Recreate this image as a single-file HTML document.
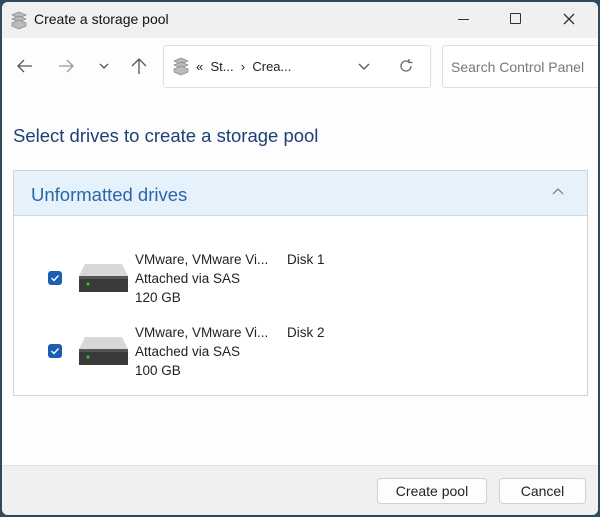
<!DOCTYPE html>
<html><head><style>
*{margin:0;padding:0;box-sizing:border-box}
body{width:600px;height:517px;overflow:hidden;font-family:"Liberation Sans",sans-serif;background:#2f4a5c;position:relative}
.win{position:absolute;left:2px;top:2px;width:596px;height:513px;background:#fdfdfd;border-radius:6px;overflow:hidden}
.abs{position:absolute}
.t{position:absolute;white-space:nowrap}
.title{left:0;top:0;width:596px;height:36px;background:#f0f0f0}
.box{border:1px solid #e0e0e0;background:#fff;border-radius:3px}
.btn{position:absolute;border:1px solid #d0d0d0;background:#fdfdfd;border-radius:4px;font-size:14px;color:#222;text-align:center;line-height:24px}
.cb{position:absolute;width:14px;height:14px;background:#1a5fb4;border-radius:3px}
.drv{position:absolute;width:49px;height:28px}
.dt{font-size:13.5px;color:#222;line-height:19px}
</style></head><body>
<div class="win">
<div class="abs title"></div>
<svg class="abs" style="left:7px;top:8px" width="20" height="20" viewBox="0 0 20 20"><g fill="#bbb" stroke="#888" stroke-width=".7"><path d="M3 5l7-3 7 3-7 3z"/><path d="M3 9l7-3 7 3-7 3z"/><path d="M3 13l7-3 7 3-7 3z"/><path d="M3 13v3l7 3 7-3v-3"/></g></svg>
<div class="t" style="left:32px;top:9px;font-size:14px;color:#111">Create a storage pool</div>
<div class="abs" style="left:456px;top:17px;width:11px;height:1px;background:#333"></div>
<div class="abs" style="left:508px;top:11px;width:11px;height:11px;border:1.3px solid #333;border-radius:1px"></div>
<svg class="abs" style="left:561px;top:11px" width="12" height="12"><path d="M1 1L11 11M11 1L1 11" stroke="#333" stroke-width="1.3"/></svg>
<svg class="abs" style="left:14px;top:55px" width="140" height="18" viewBox="0 0 140 18"><g fill="none" stroke="#555" stroke-width="1.3"><path d="M2 9h14M8 3L2 9l6 6"/><path stroke="#999" d="M43 9h14M51 3l6 6-6 6"/><path d="M84 7l4 4 4-4"/><path d="M123 17V2M116 9l7-7 7 7"/></g></svg>
<div class="abs box" style="left:161px;top:43px;width:268px;height:43px"></div>
<svg class="abs" style="left:169px;top:54px" width="20" height="20" viewBox="0 0 20 20"><g fill="#bbb" stroke="#888" stroke-width=".7"><path d="M3 5l7-3 7 3-7 3z"/><path d="M3 9l7-3 7 3-7 3z"/><path d="M3 13l7-3 7 3-7 3z"/><path d="M3 13v3l7 3 7-3v-3"/></g></svg>
<div class="t" style="left:194px;top:57px;font-size:13px;color:#222">« &nbsp;St... &nbsp;› &nbsp;Crea...</div>
<svg class="abs" style="left:355px;top:60px" width="14" height="10"><path d="M2 2l5 5 5-5" fill="none" stroke="#555" stroke-width="1.3"/></svg>
<svg class="abs" style="left:396px;top:56px" width="16" height="16"><path d="M13 8a5 5 0 1 1-2-4M11 1v3.5h3.5" fill="none" stroke="#666" stroke-width="1.3"/></svg>
<div class="abs box" style="left:440px;top:43px;width:170px;height:43px"></div>
<div class="t" style="left:449px;top:57px;font-size:14px;color:#777">Search Control Panel</div>
<div class="t" style="left:11px;top:123px;font-size:18.5px;color:#1e3f74">Select drives to create a storage pool</div>
<div class="abs" style="left:11px;top:168px;width:575px;height:226px;border:1px solid #d4d4d4;background:#fff"></div>
<div class="abs" style="left:12px;top:169px;width:573px;height:45px;background:#e5f1fb;border-bottom:1px solid #cfd8e0"></div>
<div class="t" style="left:29px;top:182px;font-size:18.5px;color:#2a67a8">Unformatted drives</div>
<svg class="abs" style="left:549px;top:185px" width="14" height="10"><path d="M2 7l5-5 5 5" fill="none" stroke="#777" stroke-width="1.2"/></svg>

<div class="cb" style="left:46px;top:269px"></div>
<svg class="abs" style="left:46px;top:269px" width="14" height="14"><path d="M3.5 7l2.5 2.5 4.5-5" fill="none" stroke="#fff" stroke-width="1.4"/></svg>
<svg class="drv" style="left:77px;top:262px" viewBox="0 0 49 28"><path d="M6 0h37l6 12H0z" fill="#d8d8d8"/><rect x="0" y="12" width="49" height="16" fill="#3a3a3a"/><rect x="0" y="12" width="49" height="3" fill="#555"/><circle cx="9" cy="20" r="1.5" fill="#3c3"/></svg>
<div class="t dt" style="left:133px;top:248px">VMware, VMware Vi...<br>Attached via SAS<br>120 GB</div>
<div class="t dt" style="left:285px;top:248px">Disk 1</div>

<div class="cb" style="left:46px;top:342px"></div>
<svg class="abs" style="left:46px;top:342px" width="14" height="14"><path d="M3.5 7l2.5 2.5 4.5-5" fill="none" stroke="#fff" stroke-width="1.4"/></svg>
<svg class="drv" style="left:77px;top:335px" viewBox="0 0 49 28"><path d="M6 0h37l6 12H0z" fill="#d8d8d8"/><rect x="0" y="12" width="49" height="16" fill="#3a3a3a"/><rect x="0" y="12" width="49" height="3" fill="#555"/><circle cx="9" cy="20" r="1.5" fill="#3c3"/></svg>
<div class="t dt" style="left:133px;top:321px">VMware, VMware Vi...<br>Attached via SAS<br>100 GB</div>
<div class="t dt" style="left:285px;top:321px">Disk 2</div>

<div class="abs" style="left:0;top:463px;width:596px;height:50px;background:#f0f0f0;border-top:1px solid #e2e2e2"></div>
<div class="btn" style="left:375px;top:476px;width:110px;height:26px">Create pool</div>
<div class="btn" style="left:497px;top:476px;width:87px;height:26px">Cancel</div>
</div>
</body></html>
